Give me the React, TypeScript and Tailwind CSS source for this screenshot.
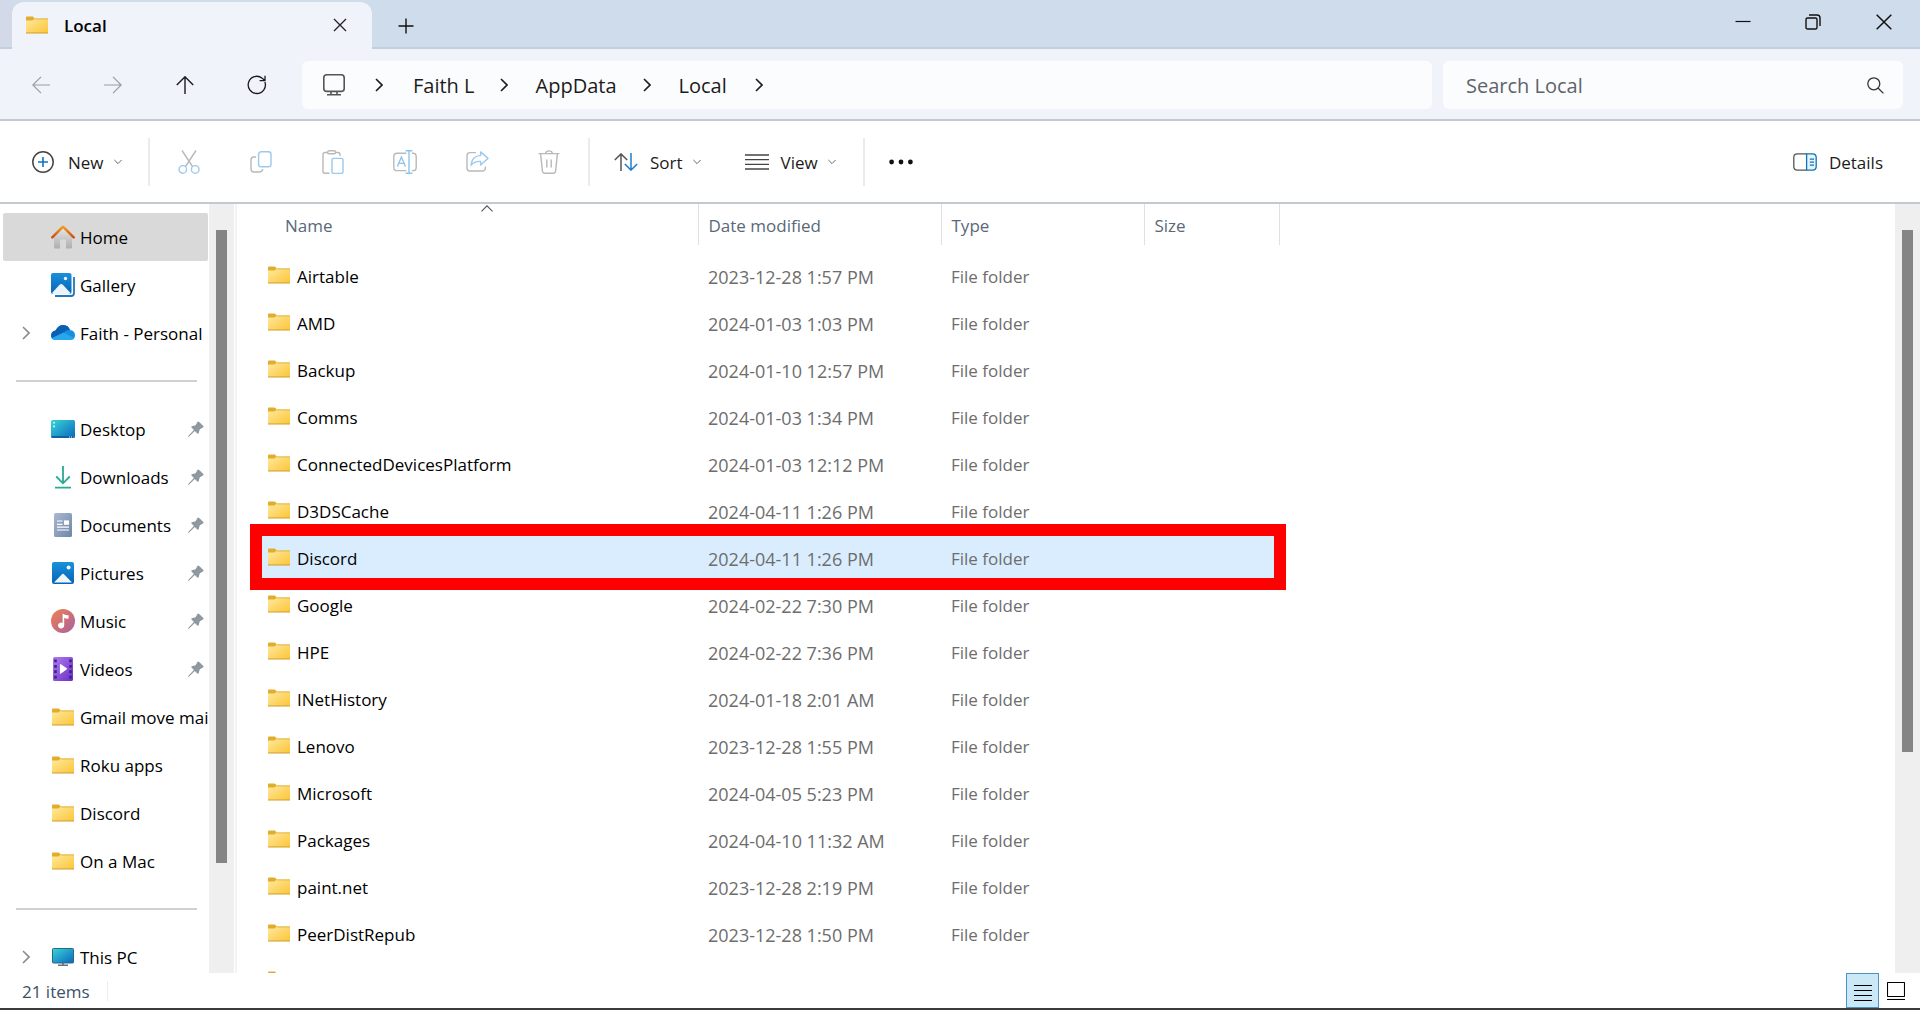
import { ReactNode } from "react";

type FileRow = {
  name: string;
  date: string;
  selected?: boolean;
};

type SideEntry = {
  label: string;
  icon: ReactNode;
  pinned?: boolean;
  expandable?: boolean;
  active?: boolean;
};

const files: FileRow[] = [
  { name: "Airtable", date: "2023-12-28 1:57 PM" },
  { name: "AMD", date: "2024-01-03 1:03 PM" },
  { name: "Backup", date: "2024-01-10 12:57 PM" },
  { name: "Comms", date: "2024-01-03 1:34 PM" },
  { name: "ConnectedDevicesPlatform", date: "2024-01-03 12:12 PM" },
  { name: "D3DSCache", date: "2024-04-11 1:26 PM" },
  { name: "Discord", date: "2024-04-11 1:26 PM", selected: true },
  { name: "Google", date: "2024-02-22 7:30 PM" },
  { name: "HPE", date: "2024-02-22 7:36 PM" },
  { name: "INetHistory", date: "2024-01-18 2:01 AM" },
  { name: "Lenovo", date: "2023-12-28 1:55 PM" },
  { name: "Microsoft", date: "2024-04-05 5:23 PM" },
  { name: "Packages", date: "2024-04-10 11:32 AM" },
  { name: "paint.net", date: "2023-12-28 2:19 PM" },
  { name: "PeerDistRepub", date: "2023-12-28 1:50 PM" },
];

// One set of gradients shared by all the icons
const Gradients = () => (
  <svg width="0" height="0" className="absolute" aria-hidden="true">
    <defs>
      <linearGradient id="folder" x1="0" y1="0" x2="1" y2="1">
        <stop offset="0" stopColor="#ffe9a0" />
        <stop offset="1" stopColor="#fcc536" />
      </linearGradient>
      <linearGradient id="roof" x1="0" y1="0" x2="0" y2="1">
        <stop offset="0" stopColor="#f09a1c" />
        <stop offset="1" stopColor="#cb4f16" />
      </linearGradient>
      <linearGradient id="wall" x1="0" y1="0" x2="0" y2="1">
        <stop offset="0" stopColor="#e6e6e6" />
        <stop offset="1" stopColor="#aeaeb2" />
      </linearGradient>
      <linearGradient id="photo" x1="0" y1="0" x2="0" y2="1">
        <stop offset="0" stopColor="#1a90dc" />
        <stop offset="1" stopColor="#0763b4" />
      </linearGradient>
      <linearGradient id="screen" x1="0" y1="0" x2="1" y2="1">
        <stop offset="0" stopColor="#37d6d8" />
        <stop offset="1" stopColor="#0b66bd" />
      </linearGradient>
      <linearGradient id="doc" x1="0" y1="0" x2="1" y2="1">
        <stop offset="0" stopColor="#a9b9d0" />
        <stop offset="1" stopColor="#6f86a8" />
      </linearGradient>
      <linearGradient id="music" x1="0" y1="0" x2="1" y2="1">
        <stop offset="0" stopColor="#f08150" />
        <stop offset="1" stopColor="#a9609f" />
      </linearGradient>
      <linearGradient id="video" x1="0" y1="0" x2="1" y2="1">
        <stop offset="0" stopColor="#b07af0" />
        <stop offset="1" stopColor="#6a2fc4" />
      </linearGradient>
    </defs>
  </svg>
);

const FolderIcon = () => (
  <svg width="22" height="18" viewBox="0 0 22 18" className="shrink-0">
    <path d="M0 1.5Q0 0.5 1 0.5H6.5Q7.2 0.5 7.7 1.2L9 3V5H0Z" fill="#e0ae2c" />
    <path d="M0 4.6H6.5L8.6 2.6H22V17H0Z" fill="url(#folder)" />
    <path d="M8.4 2.9H22" stroke="#d9a92e" strokeWidth="0.8" />
    <path d="M0 17H22" stroke="#cf9d2b" strokeWidth="1" />
  </svg>
);

const HomeIcon = () => (
  <svg width="24" height="24" viewBox="0 0 24 24">
    <path d="M3 11L12 3L21 11V22.5Q21 23.5 20 23.5H15V15.5Q15 14.5 14 14.5H10Q9 14.5 9 15.5V23.5H4Q3 23.5 3 22.5Z" fill="url(#wall)" />
    <path d="M1.3 12.3L11 2.6Q12 1.7 13 2.6L22.7 12.3" fill="none" stroke="url(#roof)" strokeWidth="2.5" strokeLinecap="round" />
  </svg>
);

const GalleryIcon = () => (
  <svg width="24" height="24" viewBox="0 0 24 24">
    <path d="M4 23H20Q23 23 23 20V4" fill="none" stroke="#2476b8" strokeWidth="1.8" />
    <rect x="0" y="0" width="20.5" height="21" rx="2" fill="url(#photo)" />
    <path d="M1 20L8.8 11.6Q10.2 10.2 11.6 11.6L19.6 20Q19 21 17.5 21H3Q1.5 21 1 20Z" fill="#e9f4fd" />
    <circle cx="14.5" cy="5.5" r="1.7" fill="#e9f4fd" />
  </svg>
);

const CloudIcon = () => (
  <svg width="24" height="16" viewBox="0 0 24 16">
    <path d="M5 15Q0 15 0 10.4Q0.3 6 4.6 5.6Q7 0 12.4 0Q17.4 0.2 19 5Q24 5.6 24 10.4Q23.6 15 19 15Z" fill="#1490df" />
    <path d="M4.6 5.6Q7 0 12.4 0Q17.4 0.2 19 5Q14.5 4.8 12.5 8L1 13Q-0.5 10 1 7.5Q2.4 5.7 4.6 5.6Z" fill="#0a5fb4" />
    <path d="M1.2 13L12.5 7.5L23 13Q21.5 15 19 15H5Q2.5 15 1.2 13Z" fill="#28a8ea" />
  </svg>
);

const DesktopIcon = () => (
  <svg width="24" height="18" viewBox="0 0 24 18">
    <rect width="24" height="18" rx="1.6" fill="url(#screen)" />
    <rect x="0.5" y="16" width="23" height="2" rx="1" fill="#0c62a4" />
    <path d="M2.2 2H4V3.6H2.2ZM2.2 5.6H4V7.2H2.2Z" fill="#d8f7fb" />
    <path d="M18 17H22.5" stroke="#d8f7fb" strokeDasharray="1 1" />
  </svg>
);

const DownloadIcon = () => (
  <svg width="24" height="24" viewBox="0 0 24 24" fill="none" stroke="#27ab94" strokeWidth="1.8">
    <path d="M12 1V18.2M5.2 11.5L12 18.3L18.8 11.5M4 22.6H20" />
  </svg>
);

const DocumentIcon = () => (
  <svg width="24" height="24" viewBox="0 0 24 24">
    <rect x="3" y="0" width="18" height="24" rx="1.6" fill="url(#doc)" />
    <path d="M6 8H11.5M6 11.4H11.5M6 14.2H18M6 17H18" stroke="#fff" strokeWidth="1.2" />
    <rect x="13" y="7.4" width="5" height="4.4" fill="#fff" />
  </svg>
);

const PicturesIcon = () => (
  <svg width="24" height="22" viewBox="0 0 24 22">
    <rect x="1" y="0" width="22" height="22" rx="2" fill="url(#photo)" />
    <path d="M3 20.6L10.8 12.4Q12 11.3 13.2 12.4L21 20.6Z" fill="#eef7fe" />
    <circle cx="17.6" cy="5.4" r="2" fill="#eef7fe" />
  </svg>
);

const MusicIcon = () => (
  <svg width="24" height="24" viewBox="0 0 24 24">
    <circle cx="12" cy="12" r="12" fill="url(#music)" />
    <path d="M11.6 4.6Q14.5 6.8 17.6 6.2V9.6Q15 10 13.2 8.8V16.5A3.1 2.9 0 1 1 11.6 14Z" fill="#fff" />
  </svg>
);

const VideoIcon = () => (
  <svg width="24" height="24" viewBox="0 0 24 24">
    <rect x="2" y="0" width="20" height="24" rx="1.6" fill="url(#video)" />
    <path d="M4.5 2.5V23M19.5 2.5V23" stroke="#42208a" strokeWidth="2.6" strokeDasharray="2.8 2.6" />
    <path d="M9.4 7.4L15.8 11.8L9.4 16.4Z" fill="#fff" stroke="#fff" strokeLinejoin="round" />
  </svg>
);

const PcIcon = () => (
  <svg width="24" height="18" viewBox="0 0 24 18">
    <path d="M12 14V17M7 17.2H17" stroke="#6b7178" strokeWidth="1.6" />
    <rect x="1.5" y="0.5" width="21" height="14.5" rx="0.8" fill="url(#screen)" stroke="#2b6a86" strokeWidth="1" />
  </svg>
);

const PinIcon = () => (
  <svg width="16" height="16" viewBox="0 0 16 16" fill="#8d98a1" className="shrink-0">
    <path d="M9.6 0.8Q10.4 0.2 11.2 0.9L15.3 4.9Q16 5.8 15 6.4L11.8 8.3L10.6 12.2Q10.1 13 9.3 12.4L6.8 10L1 15.6L0 15.9L0.4 14.8L5.9 9L3.5 6.6Q3 5.8 3.8 5.3L7.6 4.2Z" />
  </svg>
);

type ChevronProps = { className?: string; direction?: "right" | "down" };

const Chevron = ({ className = "", direction = "right" }: ChevronProps) =>
  direction === "right" ? (
    <svg width="8" height="14" viewBox="0 0 8 14" fill="none" stroke="currentColor" strokeWidth="1.6" className={className}>
      <path d="M1 1L7 7L1 13" />
    </svg>
  ) : (
    <svg width="8" height="6" viewBox="0 0 8 6" fill="none" stroke="#666" strokeWidth="1" className={className}>
      <path d="M0.4 1L4 4.6L7.6 1" />
    </svg>
  );

const sideTop: SideEntry[] = [
  { label: "Home", icon: <HomeIcon />, active: true },
  { label: "Gallery", icon: <GalleryIcon /> },
  { label: "Faith - Personal", icon: <CloudIcon />, expandable: true },
];

const sideMiddle: SideEntry[] = [
  { label: "Desktop", icon: <DesktopIcon />, pinned: true },
  { label: "Downloads", icon: <DownloadIcon />, pinned: true },
  { label: "Documents", icon: <DocumentIcon />, pinned: true },
  { label: "Pictures", icon: <PicturesIcon />, pinned: true },
  { label: "Music", icon: <MusicIcon />, pinned: true },
  { label: "Videos", icon: <VideoIcon />, pinned: true },
  { label: "Gmail move mai", icon: <FolderIcon /> },
  { label: "Roku apps", icon: <FolderIcon /> },
  { label: "Discord", icon: <FolderIcon /> },
  { label: "On a Mac", icon: <FolderIcon /> },
];

const sideBottom: SideEntry[] = [
  { label: "This PC", icon: <PcIcon />, expandable: true },
];

const SideItem = ({ label, icon, pinned, expandable, active }: SideEntry) => (
  <li>
    <button
      className={`flex items-center w-full h-12 pr-1 rounded-xs text-left ${active ? "bg-[#d9d9d9]" : ""}`}
    >
      <span className="w-12 pl-[19px] text-[#8a8a8a] shrink-0">
        {expandable && <Chevron />}
      </span>
      <span className="flex justify-center w-6 mr-[5px] shrink-0">{icon}</span>
      <span className="flex-1 pt-0.5 whitespace-nowrap">{label}</span>
      {pinned && <PinIcon />}
    </button>
  </li>
);

const SideDivider = () => (
  <li className="flex items-center h-12 pl-[13px] pr-[11px]">
    <hr className="w-full border-t-2 border-[#d0d0d0]" />
  </li>
);

const Tool = ({ label, children }: { label: string; children: ReactNode }) => (
  <button aria-label={label} className="flex items-center justify-center w-18 h-12">
    {children}
  </button>
);

const ToolDivider = () => <div className="w-[2px] h-12 bg-[#ebebeb]" />;

const TitleBar = () => (
  <header className="flex h-[49px] bg-[#cfdceb] border-b-2 border-[#c3cfdd]">
    <div className="w-3 bg-[#d3d9e8] rounded-br-lg" />
    <div className="flex items-center w-[360px] h-[49px] mt-0.5 pb-1 pl-[14px] pr-[25px] rounded-t-xl bg-[#f0f3f9]">
      <FolderIcon />
      <span className="flex-1 ml-4 pt-0.5 font-semibold">Local</span>
      <button aria-label="Close tab">
        <svg width="14" height="14" viewBox="0 0 14 14" stroke="#222" strokeWidth="1.3">
          <path d="M1 1L13 13M13 1L1 13" />
        </svg>
      </button>
    </div>
    <button aria-label="New tab" className="ml-[26px] pt-1">
      <svg width="16" height="16" viewBox="0 0 16 16" stroke="#111" strokeWidth="1.4">
        <path d="M8 0.5V15.5M0.5 8H15.5" />
      </svg>
    </button>
    <div className="flex ml-auto pb-1">
      <button aria-label="Minimize" className="flex items-center justify-center w-[70px]">
        <svg width="16" height="16" viewBox="0 0 16 16" stroke="#111" strokeWidth="1.2">
          <path d="M0.5 7.5H15.5" />
        </svg>
      </button>
      <button aria-label="Restore" className="flex items-center justify-center w-[70px]">
        <svg width="16" height="16" viewBox="0 0 16 16" fill="none" stroke="#111" strokeWidth="1.4">
          <rect x="1" y="4" width="11" height="11" rx="1.6" />
          <path d="M4 1H12Q15 1 15 4V12" />
        </svg>
      </button>
      <button aria-label="Close" className="flex items-center justify-center w-[72px]">
        <svg width="16" height="16" viewBox="0 0 16 16" stroke="#111" strokeWidth="1.5">
          <path d="M0.7 0.7L15.3 15.3M15.3 0.7L0.7 15.3" />
        </svg>
      </button>
    </div>
  </header>
);

const AddressBar = () => (
  <div className="flex items-center h-[72px] pt-0.5 pl-[5px] pr-[17px] bg-[#f0f3f9] border-b-2 border-[#c3c9d3] text-xl">
    <Tool label="Back">
      <svg width="18" height="18" viewBox="0 0 18 18" fill="none" stroke="#9a9ca3" strokeWidth="1.2">
        <path d="M18 9H1M9 0.8L0.8 9L9 17.2" />
      </svg>
    </Tool>
    <Tool label="Forward">
      <svg width="18" height="18" viewBox="0 0 18 18" fill="none" stroke="#9a9ca3" strokeWidth="1.2">
        <path d="M0 9H17M9 0.8L17.2 9L9 17.2" />
      </svg>
    </Tool>
    <Tool label="Up">
      <svg width="18" height="18" viewBox="0 0 18 18" fill="none" stroke="#1a1a1a" strokeWidth="1.4">
        <path d="M9 18V1M0.8 9L9 0.8L17.2 9" />
      </svg>
    </Tool>
    <Tool label="Refresh">
      <svg width="20" height="20" viewBox="0 0 20 20" fill="none" stroke="#1a1a1a" strokeWidth="1.3">
        <path d="M17.9 7A8.6 8.6 0 1 1 15.2 3.2L17.8 5.4M18 0.8V5.7H12.6" />
      </svg>
    </Tool>

    <nav aria-label="Path" className="flex flex-1 items-center h-12 ml-[9px] pl-[21px] rounded-md bg-[#fbfcfe] text-[#1b1b1b]">
      <svg width="22" height="22" viewBox="0 0 22 22" fill="none" stroke="#555" strokeWidth="1.6">
        <rect x="0.8" y="0.8" width="20.4" height="16.6" rx="3" />
        <path d="M8 17.4V20.4M14 17.4V20.4M4 20.8H18" />
      </svg>
      <Chevron className="ml-[30px]" />
      <a href="#faith" className="ml-[30px] pt-0.5">Faith L</a>
      <Chevron className="ml-[25px]" />
      <a href="#appdata" className="ml-7 pt-0.5">AppData</a>
      <Chevron className="ml-[26px]" />
      <a href="#local" className="ml-7 pt-0.5">Local</a>
      <Chevron className="ml-7" />
    </nav>

    <label className="flex items-center w-[460px] h-12 ml-[11px] pl-[23px] pr-[19px] rounded-md bg-[#fbfcfe]">
      <input
        type="text"
        aria-label="Search Local"
        placeholder="Search Local"
        className="flex-1 min-w-0 pt-0.5 bg-transparent outline-none placeholder:text-[#5f6368]"
      />
      <svg width="17" height="17" viewBox="0 0 17 17" fill="none" stroke="#333" strokeWidth="1.3">
        <circle cx="6.8" cy="6.8" r="6" />
        <path d="M11 11L16.4 16.4" />
      </svg>
    </label>
  </div>
);

const Toolbar = () => (
  <div className="flex items-center h-[83px] pr-[37px] bg-white border-b-2 border-[#c3c9d3] text-[#1b1b1b]">
    <button className="flex items-center w-[148px] h-12 pl-8">
      <svg width="22" height="22" viewBox="0 0 22 22" fill="none">
        <circle cx="11" cy="11" r="10.2" stroke="#444" strokeWidth="1.5" />
        <path d="M11 6V16M6 11H16" stroke="#1273c4" strokeWidth="1.6" />
      </svg>
      <span className="ml-[14px] pt-0.5">New</span>
      <Chevron direction="down" className="ml-[10px]" />
    </button>
    <ToolDivider />
    <div className="flex mx-[3px]">
      <Tool label="Cut">
        <svg width="22" height="24" viewBox="0 0 22 24" fill="none" strokeWidth="1.4">
          <path d="M4 0.5L14.5 16.5M18 0.5L7.5 16.5" stroke="#b9b9b9" />
          <circle cx="4.8" cy="19.4" r="3.8" stroke="#9cc9ee" />
          <circle cx="17.2" cy="19.4" r="3.8" stroke="#9cc9ee" />
        </svg>
      </Tool>
      <Tool label="Copy">
        <svg width="22" height="22" viewBox="0 0 22 22" fill="none" strokeWidth="1.4">
          <path d="M6 6H4Q1 6 1 9V18Q1 21 4 21H9Q12.4 21 12.8 18" stroke="#b9b9b9" />
          <rect x="8.6" y="0.8" width="12.4" height="15" rx="2.6" stroke="#9cc9ee" />
        </svg>
      </Tool>
      <Tool label="Paste">
        <svg width="22" height="24" viewBox="0 0 22 24" fill="none" strokeWidth="1.4">
          <path d="M6 2.5H3Q1 2.5 1 4.5V21.5Q1 23.3 3 23.3H7.5M13 2.5H16Q18 2.5 18 4.5V6" stroke="#b9b9b9" />
          <rect x="5.6" y="0.8" width="8" height="3" rx="1.5" stroke="#b9b9b9" />
          <rect x="10" y="8.4" width="11" height="15" rx="1.6" stroke="#9cc9ee" />
        </svg>
      </Tool>
      <Tool label="Rename">
        <svg width="24" height="24" viewBox="0 0 24 24" fill="none" strokeWidth="1.4">
          <path d="M13.4 3.2H4Q0.8 3.2 0.8 6.4V17.4Q0.8 20.6 4 20.6H13.4M18.8 3.2H20Q23.2 3.2 23.2 6.4V17.4Q23.2 20.6 20 20.6H18.8" stroke="#b9b9b9" />
          <path d="M4.4 16.6L8.4 7L12.4 16.6M5.8 13.4H11M16 0.8V23.2M12.6 0.8H19.4M12.6 23.2H19.4" stroke="#8fc3ec" />
        </svg>
      </Tool>
      <Tool label="Share">
        <svg width="23" height="21" viewBox="0 0 23 21" fill="none" strokeWidth="1.4">
          <path d="M10 1.6H4Q1 1.6 1 4.6V17Q1 20 4 20H16Q19.4 20 19.4 17V15.6" stroke="#b9b9b9" />
          <path d="M14.6 0.9L22 7.4L14.6 14V10.4Q8.4 10 5 14.4Q6 5 14.6 4.4Z" stroke="#9cc9ee" strokeLinejoin="round" />
        </svg>
      </Tool>
      <Tool label="Delete">
        <svg width="22" height="24" viewBox="0 0 22 24" fill="none" stroke="#b9b9b9" strokeWidth="1.4">
          <path d="M0.5 3.6H21.5M7.6 3.4Q8 0.9 11 0.9Q14 0.9 14.4 3.4M2.6 3.6L4.4 21Q4.6 23.2 6.8 23.2H15.2Q17.4 23.2 17.6 21L19.4 3.6M8.8 9.4V17.6M13.2 9.4V17.6" />
        </svg>
      </Tool>
    </div>
    <ToolDivider />
    <button className="flex items-center h-12 ml-6">
      <svg width="24" height="18" viewBox="0 0 24 18" fill="none" strokeWidth="1.5">
        <path d="M7 18V1M0.8 7L7 0.9L13.2 7" stroke="#555" />
        <path d="M17 0V17M10.8 11L17 17.1L23.2 11" stroke="#1b7fd0" />
      </svg>
      <span className="ml-3 pt-0.5">Sort</span>
      <Chevron direction="down" className="ml-[10px]" />
    </button>
    <button className="flex items-center h-12 ml-11">
      <svg width="24" height="16" viewBox="0 0 24 16" stroke="#444" strokeWidth="1.3">
        <path d="M0 1H24M0 5.6H24M0 10.4H24M0 15H24" />
      </svg>
      <span className="ml-3 pt-0.5">View</span>
      <Chevron direction="down" className="ml-[10px]" />
    </button>
    <div className="ml-[27px]">
      <ToolDivider />
    </div>
    <Tool label="See more">
      <svg width="24" height="6" viewBox="0 0 24 6" fill="#111">
        <circle cx="2.6" cy="3" r="2.4" />
        <circle cx="12" cy="3" r="2.4" />
        <circle cx="21.4" cy="3" r="2.4" />
      </svg>
    </Tool>
    <button className="flex items-center h-12 ml-auto">
      <svg width="24" height="18" viewBox="0 0 24 18" fill="none" strokeWidth="1.3">
        <path d="M13.6 0.8H4.4Q0.8 0.8 0.8 4.4V13.6Q0.8 17.2 4.4 17.2H13.6" stroke="#555" />
        <path d="M13.6 0.8H19.6Q23.2 0.8 23.2 4.4V13.6Q23.2 17.2 19.6 17.2H13.6Z" fill="#e4f5ff" stroke="#1273b4" />
        <path d="M16.8 6.2H21M16.8 9.2H21M16.8 12.2H21" stroke="#1273b4" />
      </svg>
      <span className="ml-3 pt-0.5">Details</span>
    </button>
  </div>
);

const Sidebar = () => (
  <aside className="flex w-[237px] shrink-0 border-r-2 border-[#f3f3f3]">
    <ul className="flex-1 min-w-0 pt-[9px] pl-[3px] pr-px overflow-hidden text-black">
      {sideTop.map((entry) => <SideItem key={entry.label} {...entry} />)}
      <SideDivider />
      {sideMiddle.map((entry) => <SideItem key={entry.label} {...entry} />)}
      <SideDivider />
      {sideBottom.map((entry) => <SideItem key={entry.label} {...entry} />)}
    </ul>
    <div className="flex flex-col w-[25px] pt-[26px] pl-[7px] mr-px bg-[#efefef]">
      <div className="w-[11px] h-[633px] bg-[#858585]" />
    </div>
  </aside>
);

const FileTable = () => (
  <main className="flex-1 min-w-0 overflow-hidden">
    <table className="table-fixed w-[1042px] border-collapse text-left">
      <colgroup>
        <col className="w-[461px]" />
        <col className="w-[243px]" />
        <col className="w-[203px]" />
        <col className="w-[135px]" />
      </colgroup>
      <thead className="text-[#5a6878]">
        <tr className="h-[41px]">
          <th className="relative pt-0.5 pl-12 font-normal border-r border-[#e0e0e0]">
            Name
            <svg width="12" height="7" viewBox="0 0 12 7" fill="none" stroke="#555" strokeWidth="1.1" className="absolute top-px left-[244px]">
              <path d="M0.5 6.3L6 0.8L11.5 6.3" />
            </svg>
          </th>
          <th className="pt-0.5 pl-[10px] font-normal border-r border-[#e0e0e0]">Date modified</th>
          <th className="pt-0.5 pl-[10px] font-normal border-r border-[#e0e0e0]">Type</th>
          <th className="pt-0.5 pl-[10px] font-normal border-r border-[#e0e0e0]">Size</th>
        </tr>
      </thead>
      <tbody className="text-[#6d6d6d]">
        <tr className="h-2">
          <td colSpan={4} />
        </tr>
        {files.map((file) => (
          <tr key={file.name} className="relative isolate h-[47px]">
            <td className="p-0">
              <div className="flex items-center gap-[7px] pl-[31px] text-black">
                <span className="pb-1"><FolderIcon /></span>
                {file.name}
              </div>
              {file.selected && (
                <div className="absolute -z-10 -top-[11px] left-[13px] -right-[7px] h-[66px] border-12 border-[#fe0000] bg-[#d9edff]" />
              )}
            </td>
            <td className="p-0 pl-[10px] text-lg leading-6">{file.date}</td>
            <td className="p-0 pl-[10px]">File folder</td>
            <td />
          </tr>
        ))}
        {/* next row, cut off by the status bar */}
        <tr className="h-[47px]">
          <td className="p-0 pb-1 pl-[31px]"><FolderIcon /></td>
          <td colSpan={3} />
        </tr>
      </tbody>
    </table>
  </main>
);

const StatusBar = () => (
  <footer className="flex items-center h-[37px] shrink-0 pl-[22px] pr-[15px] bg-white border-b-2 border-[#3f3b3c] text-[#3b4f68]">
    <span className="pt-0.5">21 items</span>
    <div className="w-px h-5 ml-[17px] bg-[#ededed]" />
    <button aria-label="Details view" className="flex items-center justify-center w-[33px] h-[35px] ml-auto border border-[#4a94c0] bg-[#cbe8f6]">
      <svg width="18" height="18" viewBox="0 0 18 18" stroke="#000" className="mt-1">
        <path d="M0 1.5H18M0 6.5H18M0 11.5H18M0 16.5H18" />
      </svg>
    </button>
    <button aria-label="Large icons" className="ml-2">
      <svg width="18" height="18" viewBox="0 0 18 18" fill="none" stroke="#000" strokeWidth="1.1">
        <rect x="0.5" y="0.5" width="17" height="14" rx="0.5" />
        <path d="M0 17.5H18" />
      </svg>
    </button>
  </footer>
);

const App = () => (
  <div className="flex flex-col h-screen overflow-hidden bg-white font-['Open_Sans','Noto_Sans',sans-serif] text-[17px] leading-6">
    <Gradients />
    <TitleBar />
    <AddressBar />
    <Toolbar />
    <div className="flex flex-1 min-h-0">
      <Sidebar />
      <FileTable />
      <div className="w-[25px] shrink-0 pt-[26px] pl-[7px] bg-[#efefef]">
        <div className="w-[11px] h-[522px] bg-[#858585]" />
      </div>
    </div>
    <StatusBar />
  </div>
);

export default App;
